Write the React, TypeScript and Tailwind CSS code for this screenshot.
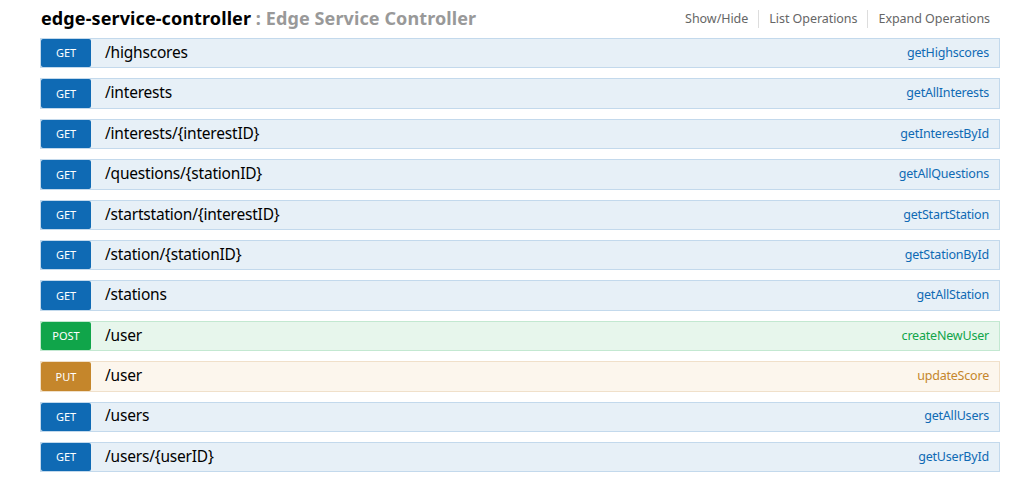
import React from "react";

type Op = { method: "GET" | "POST" | "PUT"; path: string; nick: string };

const ops: Op[] = [
  { method: "GET", path: "/highscores", nick: "getHighscores" },
  { method: "GET", path: "/interests", nick: "getAllInterests" },
  { method: "GET", path: "/interests/{interestID}", nick: "getInterestById" },
  { method: "GET", path: "/questions/{stationID}", nick: "getAllQuestions" },
  { method: "GET", path: "/startstation/{interestID}", nick: "getStartStation" },
  { method: "GET", path: "/station/{stationID}", nick: "getStationById" },
  { method: "GET", path: "/stations", nick: "getAllStation" },
  { method: "POST", path: "/user", nick: "createNewUser" },
  { method: "PUT", path: "/user", nick: "updateScore" },
  { method: "GET", path: "/users", nick: "getAllUsers" },
  { method: "GET", path: "/users/{userID}", nick: "getUserById" },
];

const styles = {
  GET: {
    row: "bg-[#e7f0f7] border-[#c3d9ec]",
    badge: "bg-[#0f6ab4]",
    nick: "text-[#0f6ab4]",
  },
  POST: {
    row: "bg-[#e7f6ec] border-[#c3e8d1]",
    badge: "bg-[#10a54a]",
    nick: "text-[#10a54a]",
  },
  PUT: {
    row: "bg-[#fcf6ed] border-[#f0e0ca]",
    badge: "bg-[#c5862b]",
    nick: "text-[#c5862b]",
  },
};

export default function App() {
  return (
    <div
      className="w-[1011px] h-[485px] bg-white overflow-hidden"
      style={{ fontFamily: '"Noto Sans", "Open Sans", sans-serif' }}
    >
      <div className="ml-[40px] w-[960px]">
        <div className="flex items-end justify-between h-[38px] pb-[10px]">
          <h2 className="text-[18px] font-bold leading-none pl-[1px] text-black mb-[1px] tracking-[0.1px]">
            edge-service-controller
            <span className="text-[#999999]"> : Edge Service Controller</span>
          </h2>
          <div className="flex items-center text-[12.5px] text-[#666666] leading-none pr-[10px] tracking-[-0.05px]">
            <span className="pr-[10px] border-r border-[#dddddd] py-[3px]">Show/Hide</span>
            <span className="px-[10px] border-r border-[#dddddd] py-[3px]">List Operations</span>
            <span className="pl-[10px] py-[3px]">Expand Operations</span>
          </div>
        </div>
        <div className="flex flex-col gap-[10px]">
          {ops.map((op, i) => {
            const s = styles[op.method];
            return (
              <div
                key={i}
                className={`h-[30.4px] border flex items-center ${s.row}`}
              >
                <span
                  className={`w-[50px] h-full rounded-[2px] flex items-center justify-center text-white text-[11px] pt-[1px] ${s.badge}`}
                >
                  {op.method}
                </span>
                <span className="ml-[14px] text-[15.5px] tracking-[-0.2px] text-black leading-none flex-1 -mt-[1px]">
                  {op.path}
                </span>
                <span className={`text-[12.5px] tracking-[-0.2px] pr-[10px] leading-none ${s.nick}`}>
                  {op.nick}
                </span>
              </div>
            );
          })}
        </div>
      </div>
    </div>
  );
}
